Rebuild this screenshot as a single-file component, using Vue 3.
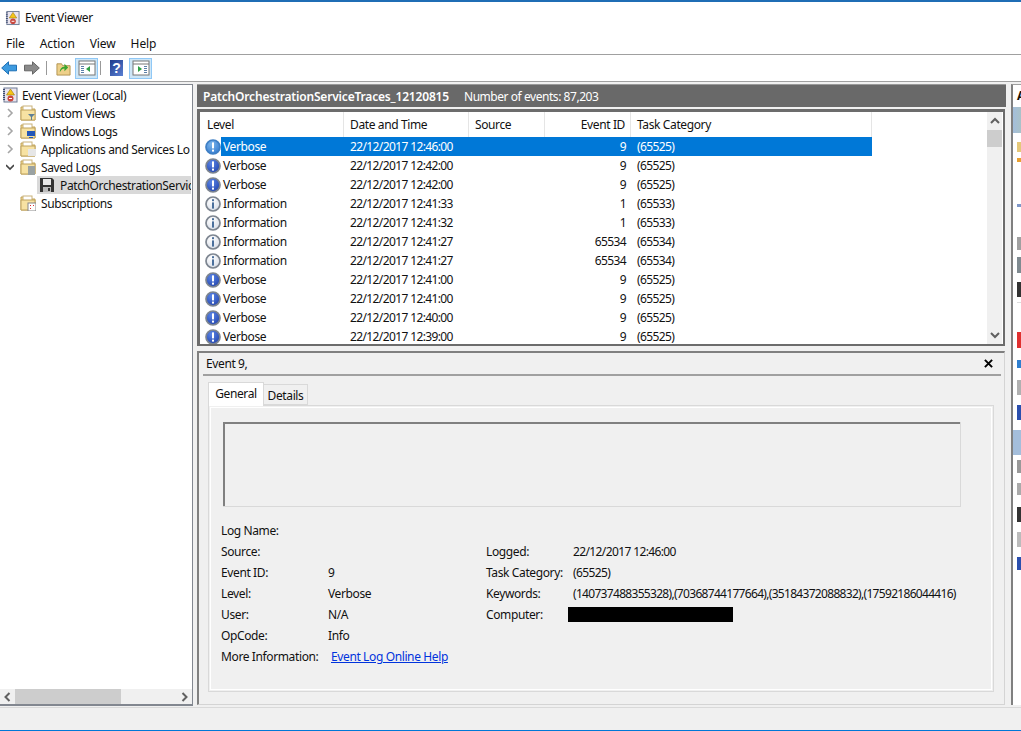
<template>
  <div class="window">
    <div class="title-bar">
      <svg class="app-icon" viewBox="0 0 16 16"><use href="#ev-icon" /></svg>
      <span>Event Viewer</span>
    </div>
    <div class="menu-bar">
      <span v-for="m in menus" :key="m">{{ m }}</span>
    </div>
    <div class="tool-bar">
      <svg class="tool" viewBox="0 0 16 14"><path d="M.7 7L7.5.8v3.4h8v5.6h-8v3.4z" fill="#3d9be0" stroke="#1c6fb5" /></svg>
      <svg class="tool tool-next" viewBox="0 0 16 14"><path d="M15.3 7L8.5.8v3.4h-8v5.6h8v3.4z" fill="#8a8a8a" stroke="#666" /></svg>
      <i class="sep"></i>
      <svg class="tool tool-wide" viewBox="0 0 16 16">
        <path d="M1 3h5l1 2h8v10H1z" fill="#eed08a" stroke="#b0914e" />
        <path d="M4 12c0-4 2-6 5-6V3l4 4-4 4V8c-2 0-3 1-5 4z" fill="#3aa52e" />
      </svg>
      <span class="tool-on">
        <svg viewBox="0 0 18 16">
          <rect x="1" y="1" width="16" height="14" fill="#fff" stroke="#777" />
          <path d="M1 4h16" stroke="#777" />
          <path d="M3 6h3v1H3zM3 8h3v1H3zM3 10h3v1H3zM3 12h3v1H3z" fill="#5a7fa8" />
          <path d="M12 6v6L8 9z" fill="#2ea043" />
        </svg>
      </span>
      <i class="sep sep-help"></i>
      <span class="help-icon">?</span>
      <span class="tool-on">
        <svg viewBox="0 0 18 16">
          <rect x="1" y="1" width="16" height="14" fill="#fff" stroke="#777" />
          <path d="M1 4h16" stroke="#777" />
          <path d="M12 6h3v1h-3zM12 8h3v1h-3zM12 10h3v1h-3zM12 12h3v1h-3z" fill="#5a7fa8" />
          <path d="M6 6v6l4-3z" fill="#2ea043" />
        </svg>
      </span>
    </div>

    <div class="main">
      <aside class="tree-pane">
        <div class="tree">
          <div class="tree-root">
            <svg class="tree-icon" viewBox="0 0 16 16"><use href="#ev-icon" /></svg>
            <span>Event Viewer (Local)</span>
          </div>
          <div v-for="n in treeItems" :key="n.label" class="tree-row">
            <svg class="chev" viewBox="0 0 8 10"><path :d="n.open ? 'M0 3l4 4 4-4' : 'M2 1l4 4-4 4'" fill="none" :stroke="n.open ? '#444' : '#a6a6a6'" stroke-width="1.6" /></svg>
            <svg class="tree-icon" viewBox="0 0 16 16">
              <path d="M1 2h5l1 2h8v11H1z" fill="#f6dc8e" stroke="#bfa25c" />
              <rect x="3" y="1" width="9" height="5" fill="#fff" stroke="#c9b27a" />
              <path d="M1 5h14v10H1z" fill="#f7e2a2" stroke="#bfa25c" />
              <path :d="n.badge" :fill="n.color" />
            </svg>
            <span>{{ n.label }}</span>
          </div>
          <div class="tree-row tree-leaf">
            <svg class="tree-icon" viewBox="0 0 16 16">
              <path d="M1 1h12l2 2v12H1z" fill="#333" />
              <rect x="4" y="2" width="8" height="6" fill="#e8e8e8" />
              <rect x="4" y="10" width="8" height="5" fill="#bbb" />
              <rect x="9" y="11" width="2" height="3" fill="#333" />
            </svg>
            <span>PatchOrchestrationServic</span>
          </div>
          <div class="tree-row">
            <i class="chev"></i>
            <svg class="tree-icon" viewBox="0 0 16 16">
              <path d="M1 2h5l1 2h8v11H1z" fill="#f6dc8e" stroke="#bfa25c" />
              <rect x="3" y="1" width="9" height="5" fill="#fff" stroke="#c9b27a" />
              <path d="M1 5h14v10H1z" fill="#f7e2a2" stroke="#bfa25c" />
              <rect x="8" y="8" width="8" height="8" fill="#fff" stroke="#888" />
              <path d="M10 10h1v1h-1zM13 10h1v1h-1zM10 13h1v1h-1z" fill="#d33" />
            </svg>
            <span>Subscriptions</span>
          </div>
        </div>
        <div class="h-scroll">
          <svg viewBox="0 0 8 10"><path d="M6 1L2 5l4 4" fill="none" stroke="#606060" stroke-width="2" /></svg>
          <div class="h-track"><div class="h-thumb"></div></div>
          <svg viewBox="0 0 8 10"><path d="M2 1l4 4-4 4" fill="none" stroke="#606060" stroke-width="2" /></svg>
        </div>
      </aside>

      <section class="center">
        <div class="log-head">
          <b>PatchOrchestrationServiceTraces_12120815</b>
          <span>Number of events: 87,203</span>
        </div>

        <div class="list-frame">
          <div class="list">
            <div class="list-head">
              <span class="col-level">Level</span>
              <span class="col-date">Date and Time</span>
              <span class="col-src">Source</span>
              <span class="col-id">Event ID</span>
              <span class="col-cat">Task Category</span>
            </div>
            <div v-for="(e, i) in events" :key="i" class="list-row" :class="{ selected: i === 0 }">
              <span class="col-level level-cell">
                <svg class="level-icon" viewBox="0 0 16 16">
                  <circle cx="8" cy="8" r="7" :fill="iconFill(e, i)" :stroke="i === 0 ? '#3f7fc4' : '#7d8590'" stroke-width="1.7" />
                  <template v-if="e.level === 'Verbose'">
                    <rect x="7" y="3.4" width="2" height="6" fill="#fff" />
                    <rect x="7" y="10.6" width="2" height="2" fill="#fff" />
                  </template>
                  <template v-else>
                    <rect x="7" y="3.2" width="2" height="2" fill="#4a6f9c" />
                    <rect x="7" y="6.4" width="2" height="6.2" fill="#4a6f9c" />
                  </template>
                </svg>
                <span>{{ e.level }}</span>
              </span>
              <span class="col-date num">{{ e.date }}</span>
              <span class="col-src"></span>
              <span class="col-id num">{{ e.id }}</span>
              <span class="col-cat num">{{ e.cat }}</span>
            </div>
          </div>
          <div class="v-scroll">
            <svg viewBox="0 0 10 8"><path d="M1 6l4-4 4 4" fill="none" stroke="#606060" stroke-width="2" /></svg>
            <div class="v-track"><div class="v-thumb"></div></div>
            <svg viewBox="0 0 10 8"><path d="M1 2l4 4 4-4" fill="none" stroke="#606060" stroke-width="2" /></svg>
          </div>
        </div>

        <div class="detail-frame">
          <div class="detail-head">
            <span>Event 9,</span>
            <svg viewBox="0 0 10 10"><path d="M1 1l8 8M9 1l-8 8" stroke="#000" stroke-width="2.2" /></svg>
          </div>
          <div class="tabs">
            <span class="tab active">General</span>
            <span class="tab">Details</span>
          </div>
          <div class="tab-body">
            <div class="msg-box"></div>
            <div class="props">
              <div class="props-col">
                <div v-for="p in propsLeft" :key="p[0]" class="prop">
                  <span class="prop-key">{{ p[0] }}</span>
                  <a v-if="p[2]" class="prop-link">{{ p[1] }}</a>
                  <span v-else>{{ p[1] }}</span>
                </div>
              </div>
              <div class="props-col props-right">
                <div v-for="p in propsRight" :key="p[0]" class="prop">
                  <span class="prop-key">{{ p[0] }}</span>
                  <span :class="p[2] ? 'num-tight' : 'num'">{{ p[1] }}</span>
                </div>
                <div class="prop">
                  <span class="prop-key">Computer:</span>
                  <i class="redacted"></i>
                </div>
              </div>
            </div>
          </div>
        </div>
      </section>

      <aside class="actions-pane">
        <div class="act-head">A</div>
        <div class="act-band"></div>
        <div class="act-icons">
          <i
            v-for="(c, i) in actionIcons"
            :key="i"
            class="act-icon"
            :class="{ 'act-band': c.band }"
            :style="{ background: c.color, height: c.h + 'px', marginTop: c.gap + 'px' }"
          ></i>
        </div>
      </aside>
    </div>

    <div class="status-bar"></div>

    <svg class="defs" width="0" height="0">
      <defs>
        <g id="ev-icon">
          <rect x="2" y="1" width="13" height="14" fill="#e9e4ee" stroke="#6c7a94" />
          <path d="M2 2v12" stroke="#3c4a70" stroke-width="2" stroke-dasharray="1 1" />
          <path d="M8.5 2l4 6h-8z" fill="#f5c518" stroke="#96760c" stroke-width=".6" />
          <circle cx="8.5" cy="11.5" r="3" fill="#c9463d" />
          <rect x="7" y="11" width="3" height="1" fill="#fff" />
        </g>
        <radialGradient id="verbose-fill" cx=".4" cy=".3" r=".8">
          <stop offset="0" stop-color="#5b86e6" />
          <stop offset="1" stop-color="#1f3fa8" />
        </radialGradient>
        <radialGradient id="selected-fill" cx=".4" cy=".3" r=".8">
          <stop offset="0" stop-color="#7db5ea" />
          <stop offset="1" stop-color="#2f78cf" />
        </radialGradient>
        <radialGradient id="info-fill" cx=".4" cy=".3" r=".8">
          <stop offset="0" stop-color="#ffffff" />
          <stop offset="1" stop-color="#d5dbe6" />
        </radialGradient>
      </defs>
    </svg>
  </div>
</template>

<script setup>
const menus = ['File', 'Action', 'View', 'Help']

const treeItems = [
  { label: 'Custom Views', badge: 'M8 9h7l-3 3v3h-1v-3z', color: '#5f7f96' },
  { label: 'Windows Logs', badge: 'M7 8h8v5H7zM9 14h4v1H9z', color: '#2457b8' },
  { label: 'Applications and Services Lo', badge: 'M8 8h8v7H8z', color: '#e6e6e6' },
  { label: 'Saved Logs', open: true, badge: 'M8 7h7v9H8z', color: '#9aa2a2' },
]

const row = (level, date, id, cat) => ({ level, date: '22/12/2017 ' + date, id, cat })

const events = [
  row('Verbose', '12:46:00', 9, '(65525)'),
  row('Verbose', '12:42:00', 9, '(65525)'),
  row('Verbose', '12:42:00', 9, '(65525)'),
  row('Information', '12:41:33', 1, '(65533)'),
  row('Information', '12:41:32', 1, '(65533)'),
  row('Information', '12:41:27', 65534, '(65534)'),
  row('Information', '12:41:27', 65534, '(65534)'),
  row('Verbose', '12:41:00', 9, '(65525)'),
  row('Verbose', '12:41:00', 9, '(65525)'),
  row('Verbose', '12:40:00', 9, '(65525)'),
  row('Verbose', '12:39:00', 9, '(65525)'),
]

const iconFill = (e, i) => {
  if (i === 0) return 'url(#selected-fill)'
  return e.level === 'Verbose' ? 'url(#verbose-fill)' : 'url(#info-fill)'
}

const propsLeft = [
  ['Log Name:', ''],
  ['Source:', ''],
  ['Event ID:', '9'],
  ['Level:', 'Verbose'],
  ['User:', 'N/A'],
  ['OpCode:', 'Info'],
  ['More Information:', 'Event Log Online Help', true],
]

const propsRight = [
  ['Logged:', '22/12/2017 12:46:00'],
  ['Task Category:', '(65525)'],
  ['Keywords:', '(140737488355328),(70368744177664),(35184372088832),(17592186044416)', true],
]

// the actions pane is cut off by the window, only slivers of its icons show
const actionIcons = [
  { color: '#e5c878', h: 10, gap: 9 },
  { color: '#e8a030', h: 4, gap: 6 },
  { color: '#7f97c8', h: 3, gap: 42 },
  { color: '#a0a0a0', h: 13, gap: 30 },
  { color: '#7f8a90', h: 16, gap: 7 },
  { color: '#333', h: 15, gap: 9 },
  { color: '#ddd', h: 1, gap: 5 },
  { color: '#e03030', h: 16, gap: 29 },
  { color: '#2f7fd0', h: 8, gap: 12 },
  { color: '#b0b0b0', h: 15, gap: 12 },
  { color: '#2b4fae', h: 15, gap: 10 },
  { color: '#a4bedb', h: 25, gap: 10, band: true },
  { color: '#999', h: 13, gap: 5 },
  { color: '#aaa', h: 12, gap: 10 },
  { color: '#333', h: 15, gap: 12 },
  { color: '#bbb', h: 15, gap: 10 },
  { color: '#2b4fae', h: 13, gap: 10 },
]
</script>

<style>
html,
body {
  margin: 0;
  background: #fff;
}
</style>

<style scoped>
.window {
  width: 1021px;
  height: 731px;
  overflow: hidden;
  display: flex;
  flex-direction: column;
  background: #f0f0f0;
  border-top: 2px solid #1f6db5;
  border-bottom: 1px solid #0078d7;
  box-sizing: border-box;
  font-family: "Noto Sans", "Open Sans", sans-serif;
  font-size: 12px;
  letter-spacing: -0.38px;
  color: #111;
}

.num {
  letter-spacing: -0.62px;
}

.num-tight {
  letter-spacing: -0.69px;
}

.title-bar {
  height: 31px;
  background: #fff;
  display: flex;
  align-items: center;
  gap: 5px;
  padding-left: 5px;
  flex: none;
}

.app-icon {
  width: 15px;
  height: 16px;
}

.menu-bar {
  height: 21px;
  background: #fff;
  display: flex;
  align-items: center;
  gap: 15px;
  letter-spacing: -0.1px;
  padding: 0 0 1px 6px;
  box-sizing: border-box;
  flex: none;
}

.tool-bar {
  height: 26px;
  background: #fff;
  border-top: 1px solid #a0a0a0;
  display: flex;
  align-items: center;
  padding-left: 1px;
  flex: none;
}

.tool {
  width: 16px;
  height: 14px;
  margin-right: 7px;
}

.tool-next {
  margin-right: 6px;
}

.tool-wide {
  width: 15px;
  height: 15px;
  margin: 0 4px 0 9px;
}

.sep {
  width: 1px;
  height: 14px;
  background: #999;
}

.sep-help {
  margin-left: 2px;
}

.tool-on {
  width: 23px;
  height: 21px;
  box-sizing: border-box;
  background: #cde6f7;
  border: 1px solid #90c8f6;
  display: flex;
  align-items: center;
  justify-content: center;
}

.tool-on svg {
  width: 18px;
  height: 16px;
}

.help-icon {
  width: 13px;
  height: 16px;
  margin: 0 6px 0 9px;
  background: linear-gradient(135deg, #1f3a8a, #5a80d4);
  color: #fff;
  font: bold 14px/16px "Liberation Sans", sans-serif;
  letter-spacing: 0;
  text-align: center;
}

.main {
  flex: 1;
  min-height: 0;
  display: flex;
  border-top: 1px solid #a0a0a0;
  padding-top: 2px;
}

.tree-pane {
  width: 193px;
  box-sizing: border-box;
  margin-bottom: 1px;
  background: #fff;
  border: 1px solid #828790;
  border-left: none;
  border-bottom: 2px solid #828790;
  display: flex;
  flex-direction: column;
  flex: none;
}

.tree {
  flex: 1;
  min-height: 0;
  overflow: hidden;
  padding-top: 1px;
  white-space: nowrap;
}

.tree-root,
.tree-row {
  display: flex;
  align-items: center;
  height: 18px;
}

.tree-root {
  padding-left: 2px;
  gap: 4px;
}

.tree-row {
  padding-left: 6px;
  gap: 5px;
}

.tree-row > .tree-icon {
  margin-left: 1px;
}

.tree-leaf {
  background: #d9d9d9;
  margin-left: 37px;
  padding-left: 1px;
  margin-right: 1px;
  overflow: hidden;
}

.chev {
  width: 8px;
  height: 10px;
  flex: none;
  display: block;
}

.tree-icon {
  width: 16px;
  height: 16px;
  flex: none;
}

.h-scroll {
  height: 15px;
  background: #f0f0f0;
  display: flex;
  align-items: center;
  flex: none;
}

.h-scroll svg {
  width: 15px;
  height: 10px;
  flex: none;
}

.h-track {
  flex: 1;
  height: 100%;
}

.h-thumb {
  width: 106px;
  height: 100%;
  background: #cdcdcd;
}

.center {
  width: 810px;
  flex: none;
  display: flex;
  flex-direction: column;
  margin-left: 4px;
  padding-bottom: 2px;
  box-sizing: border-box;
  min-height: 0;
}

.log-head {
  height: 23px;
  background: #696969;
  border-top: 1px solid #9a9a9a;
  box-sizing: border-box;
  color: #fff;
  display: flex;
  align-items: center;
  gap: 15px;
  padding-left: 6px;
  margin-right: 1px;
  flex: none;
}

.log-head b {
  font-weight: 600;
  letter-spacing: -0.18px;
}

.log-head span {
  letter-spacing: -0.45px;
}

.list-frame {
  height: 237px;
  margin: 2px 2px 0 0;
  background: #fff;
  border-style: solid;
  border-color: #6c6c6c;
  border-width: 3px 2px 2px 0;
  box-shadow: inset 3px 0 0 #6c6c6c, inset 2px 0 0 #c4c4c4, inset 1px 0 0 #6c6c6c;
  padding-left: 3px;
  display: flex;
  flex: none;
  box-sizing: border-box;
}

.list {
  flex: 1;
  min-width: 0;
  overflow: hidden;
}

.list-head,
.list-row {
  display: flex;
  width: 672px;
}

.list-head {
  height: 25px;
  align-items: center;
}

.list-head span {
  box-sizing: border-box;
  padding-left: 6px;
  height: 100%;
  line-height: 26px;
  border-right: 1px solid #e5e5e5;
}

.list-head .col-level {
  padding-left: 7px;
}

.list-head .col-id {
  padding: 0 5px 0 0;
}

.list-row {
  height: 19px;
  align-items: center;
}

.list-row .col-date {
  padding-left: 6px;
  box-sizing: border-box;
}

.selected {
  background: linear-gradient(90deg, #fff 0, #fff 21px, #0078d7 21px);
  color: #fff;
}

.col-level {
  width: 144px;
  flex: none;
}

.col-date {
  width: 125px;
  flex: none;
}

.col-src {
  width: 76px;
  flex: none;
}

.col-id {
  width: 86px;
  flex: none;
  text-align: right;
  padding-right: 5px;
  box-sizing: border-box;
}

.col-cat {
  width: 241px;
  flex: none;
  padding-left: 6px;
  box-sizing: border-box;
}

.level-cell {
  display: flex;
  align-items: center;
  padding-left: 5px;
  box-sizing: border-box;
  gap: 2px;
}

.level-icon {
  width: 16px;
  height: 16px;
  flex: none;
}

.v-scroll {
  width: 15px;
  margin-right: 1px;
  background: #f0f0f0;
  display: flex;
  flex-direction: column;
  align-items: center;
  flex: none;
}

.v-scroll svg {
  width: 10px;
  height: 18px;
  flex: none;
}

.v-track {
  flex: 1;
  width: 100%;
}

.v-thumb {
  height: 17px;
  background: #cdcdcd;
}

.detail-frame {
  flex: 1;
  min-height: 0;
  margin: 5px 2px 0 0;
  border: 1px solid #d4d4d4;
  border-top: 2px solid #808080;
  border-left: 2px solid #808080;
  display: flex;
  flex-direction: column;
  box-sizing: border-box;
  padding: 0 3px 12px 7px;
}

.detail-head {
  height: 23px;
  margin-left: -3px;
  padding: 0 8px 0 3px;
  border-bottom: 2px solid #a0a0a0;
  box-sizing: border-box;
  display: flex;
  align-items: center;
  justify-content: space-between;
  flex: none;
}

.detail-head svg {
  width: 9px;
  height: 9px;
}

.tabs {
  display: flex;
  align-items: flex-end;
  height: 23px;
  margin: 6px 0 0 2px;
  flex: none;
}

.tab {
  width: 44px;
  height: 21px;
  line-height: 22px;
  box-sizing: border-box;
  border: 1px solid #d9d9d9;
  border-left: none;
  text-align: center;
}

.tab.active {
  width: 56px;
  height: 24px;
  line-height: 21px;
  background: #fff;
  border-left: 1px solid #d9d9d9;
  margin-bottom: -1px;
  border-bottom: none;
  position: relative;
}

.tab-body {
  flex: 1;
  min-height: 0;
  margin: 0 7px 0 2px;
  border: 1px solid #d9d9d9;
  box-shadow: inset 0 0 0 1px #f0f0f0, inset 0 0 0 2px #fff;
  padding: 16px 32px 0 14px;
  box-sizing: border-box;
  display: flex;
  flex-direction: column;
}

.msg-box {
  height: 85px;
  border: 2px solid #d9d9d9;
  border-width: 0 1px 1px 0;
  box-shadow: inset 2px 2px 0 #808080;
  box-sizing: border-box;
  flex: none;
}

.props {
  display: flex;
  margin-top: 13px;
  margin-left: -2px;
  white-space: nowrap;
}

.props-col {
  width: 265px;
  flex: none;
}

.props-right {
  padding-top: 21px;
}

.prop {
  display: flex;
  height: 21px;
  line-height: 21px;
}

.prop-key {
  width: 107px;
  flex: none;
}

.props-right .prop-key {
  width: 87px;
}

.prop-link {
  color: #0033dd;
  text-decoration: underline;
  margin-left: 3px;
}

.redacted {
  width: 165px;
  height: 15px;
  margin: 3px 0 0 -5px;
  background: #000;
}

.actions-pane {
  flex: 1;
  min-width: 0;
  margin: 0 0 2px 4px;
  background: #fff;
  border-left: 2px solid #808080;
  border-top: 1px solid #a0a0a0;
  overflow: hidden;
  display: flex;
  flex-direction: column;
  font-weight: 700;
}

.act-head {
  height: 22px;
  line-height: 22px;
  padding-left: 4px;
  color: #1a1206;
  flex: none;
}

.act-band {
  height: 26px;
  background: linear-gradient(90deg, #a4bedb, #a9c2c8);
  flex: none;
}

.act-icons {
  display: flex;
  flex-direction: column;
  align-items: flex-end;
}

.act-icon {
  width: 4px;
  flex: none;
}

.act-icon.act-band {
  width: 100%;
}

.status-bar {
  height: 23px;
  background: #f0f0f0;
  border-top: 1px solid #d9d9d9;
  box-sizing: border-box;
  flex: none;
}

.defs {
  position: absolute;
}
</style>
